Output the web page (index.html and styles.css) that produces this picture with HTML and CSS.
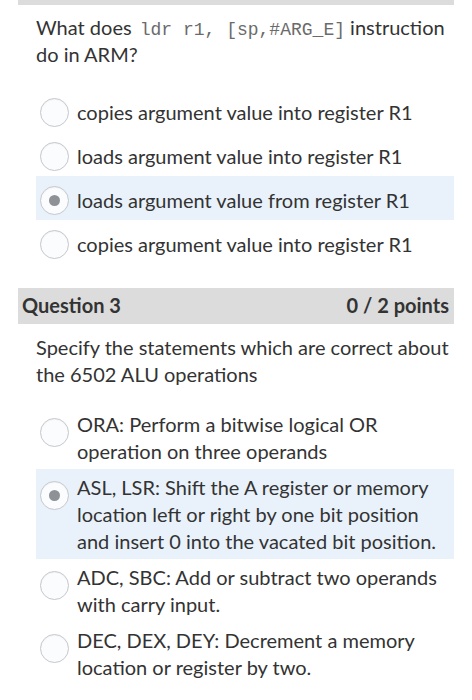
FILE: index.html
```html
<!DOCTYPE html>
<html>
<head>
<meta charset="utf-8">
<link rel="stylesheet" href="styles.css">
</head>
<body>
<div class="page">
  <div class="prev-bar"></div>
  <section class="question q2">
    <p class="question-text">What does <code>ldr r1, [sp,#ARG_E]</code> instruction do in ARM?</p>
    <ul class="answers single">
      <li class="answer"><span class="radio"></span><span class="label">copies argument value into register R1</span></li>
      <li class="answer"><span class="radio"></span><span class="label">loads argument value into register R1</span></li>
      <li class="answer selected"><span class="radio"><span class="dot"></span></span><span class="label">loads argument value from register R1</span></li>
      <li class="answer"><span class="radio"></span><span class="label">copies argument value into register R1</span></li>
    </ul>
  </section>
  <section class="question q3">
    <header class="question-header">
      <span class="q-title">Question 3</span>
      <span class="q-points">0 / 2 points</span>
    </header>
    <p class="question-text">Specify the statements which are correct about the 6502 ALU operations</p>
    <ul class="answers multi">
      <li class="answer"><span class="radio"></span><span class="label">ORA: Perform a bitwise logical OR operation on three operands</span></li>
      <li class="answer selected"><span class="radio"><span class="dot"></span></span><span class="label">ASL, LSR: Shift the A register or memory location left or right by one bit position and insert 0 into the vacated bit position.</span></li>
      <li class="answer"><span class="radio"></span><span class="label">ADC, SBC: Add or subtract two operands with carry input.</span></li>
      <li class="answer"><span class="radio"></span><span class="label">DEC, DEX, DEY: Decrement a memory location or register by two.</span></li>
    </ul>
  </section>
</div>
</body>
</html>
```
FILE: styles.css
```css
html, body {
  margin: 0;
  padding: 0;
  background: #ffffff;
}
body {
  font-family: Lato, "Open Sans", "Liberation Sans", sans-serif;
  font-size: 20px;
  line-height: 27px;
  color: #333333;
}
.page {
  padding: 0 18px;
}
.prev-bar {
  height: 5px;
  background: #dcdcdc;
}
.question-text {
  margin: 0;
  padding: 0 0 0 18px;
}
.q2 .question-text {
  padding-top: 9px;
}
code {
  font-family: "Liberation Mono", "Courier New", monospace;
  font-size: 18px;
  line-height: 1;
  color: #6b6b6b;
  margin-left: 3px;
}
.answers {
  list-style: none;
  margin: 0 0 0 18px;
  padding: 0;
}
.q2 .answers {
  margin-top: 19.5px;
}
.answer {
  display: flex;
  align-items: flex-start;
  gap: 8px;
  padding-left: 4px;
  padding-right: 10px;
}
.answer.selected {
  background: #e9f2fb;
}
.radio {
  flex: none;
  width: 27px;
  height: 27px;
  border: 1px solid #c4c8cc;
  border-radius: 50%;
  background: #fbfcfe;
  display: flex;
  align-items: center;
  justify-content: center;
  box-shadow: inset 0 1px 1px rgba(0,0,0,0.04);
}
.dot {
  width: 11px;
  height: 11px;
  border-radius: 50%;
  background: #8e9196;
}
.single .answer {
  height: 44px;
  box-sizing: border-box;
  padding-top: 11.5px;
}
.single .radio {
  margin-top: -1.5px;
}
.multi .answer {
  padding-top: 4.5px;
  padding-bottom: 4.5px;
}
.multi .radio {
  margin-top: 7px;
}
.q3 {
  margin-top: 24px;
}
.question-header {
  height: 36px;
  background: #dcdcdc;
  display: flex;
  align-items: center;
  justify-content: space-between;
  padding: 0 5px 0 4px;
  font-weight: 700;
}
.q3 .question-text {
  padding-top: 10.5px;
}
.q3 .answers {
  margin-top: 18px;
}
```
